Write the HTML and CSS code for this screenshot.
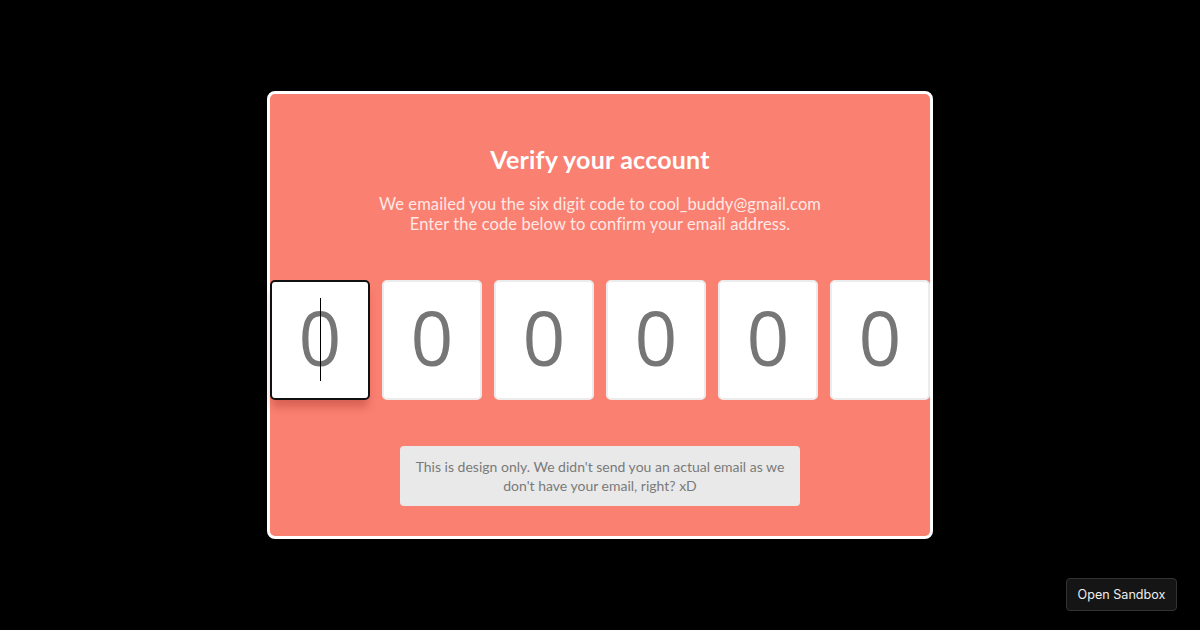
FILE: index.html
```html
<!DOCTYPE html>
<html lang="en">
<head>
<meta charset="utf-8">
<title>Verify your account</title>
<link rel="stylesheet" href="styles.css">
</head>
<body>
<main class="stage">
  <section class="card">
    <h1 class="title">Verify your account</h1>
    <p class="lead">We emailed you the six digit code to cool_buddy@gmail.com<br>Enter the code below to confirm your email address.</p>
    <div class="code">
      <div class="digit focused"><input class="digit-input" type="text" maxlength="1" placeholder="0"><span class="caret"></span></div>
      <div class="digit"><input class="digit-input" type="text" maxlength="1" placeholder="0"></div>
      <div class="digit"><input class="digit-input" type="text" maxlength="1" placeholder="0"></div>
      <div class="digit"><input class="digit-input" type="text" maxlength="1" placeholder="0"></div>
      <div class="digit"><input class="digit-input" type="text" maxlength="1" placeholder="0"></div>
      <div class="digit"><input class="digit-input" type="text" maxlength="1" placeholder="0"></div>
    </div>
    <p class="note">This is design only. We didn't send you an actual email as we don't have your email, right? xD</p>
  </section>
</main>
<button class="sandbox">Open Sandbox</button>
</body>
</html>
```

FILE: styles.css
```css
* { box-sizing: border-box; }
html, body { margin: 0; padding: 0; }
body {
  width: 1200px;
  height: 630px;
  background: #000;
  font-family: "Lato", "Open Sans", sans-serif;
  position: relative;
  overflow: hidden;
}
.stage {
  height: 630px;
  display: flex;
  align-items: center;
  justify-content: center;
}
.card {
  width: 666px;
  height: 448px;
  background: #fa8072;
  border: 3px solid #fff;
  border-radius: 8px;
  padding: 49px 0 0;
  display: flex;
  flex-direction: column;
  align-items: center;
}
.title {
  margin: 0;
  color: #fff;
  font-size: 25px;
  font-weight: 700;
  line-height: 32px;
  letter-spacing: 0.2px;
}
.lead {
  margin: 19px 0 0;
  color: #ffe9e5;
  font-size: 16.5px;
  line-height: 20px;
  text-align: center;
  font-weight: 400;
  letter-spacing: 0.1px;
}
.code {
  margin-top: 46px;
  display: flex;
  gap: 12px;
}
.digit {
  position: relative;
  width: 100px;
  height: 120px;
}
.digit-input {
  width: 100%;
  height: 100%;
  border: 2px solid #ececec;
  border-radius: 5px;
  background: #fff;
  text-align: center;
  font-family: "Open Sans", sans-serif;
  font-size: 75px;
  color: #767676;
  padding: 0 0 6px;
  outline: none;
  caret-color: transparent;
}
.digit-input::placeholder { color: #767676; opacity: 1; }
.focused .digit-input {
  border-color: #111;
  box-shadow: 0 9px 8px -2px rgba(150, 40, 30, 0.35);
}
.caret {
  position: absolute;
  left: 50px;
  top: 18px;
  width: 1px;
  height: 83px;
  background: #000;
}
.note {
  margin: 46px 0 0;
  width: 400px;
  height: 60px;
  background: #e9e9e9;
  border-radius: 4px;
  color: #7a7a7a;
  font-size: 14px;
  line-height: 19px;
  text-align: center;
  padding: 11px 12px 0;
}
.sandbox {
  position: absolute;
  right: 23px;
  bottom: 19px;
  width: 111px;
  height: 33px;
  background: #151515;
  border: 1px solid #333;
  border-radius: 4px;
  color: #eee;
  font-family: "Inter", sans-serif;
  font-size: 12.6px;
  padding: 0;
}
```
